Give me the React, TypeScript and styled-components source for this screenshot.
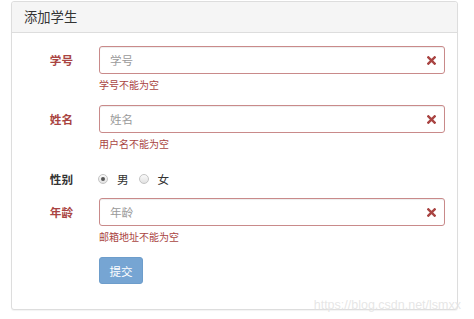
import React from "react";
import styled, { createGlobalStyle } from "styled-components";

const GlobalStyle = createGlobalStyle`
  html, body {
    margin: 0;
    padding: 0;
    background: #ffffff;
    font-family: "Noto Sans CJK SC", "Noto Sans", "Liberation Sans", sans-serif;
    color: #333333;
  }
`;

const Page = styled.div`
  position: relative;
  width: 474px;
  height: 319px;
  padding: 1px 0 0 11px;
  box-sizing: border-box;
  overflow: hidden;
`;

const Panel = styled.div`
  width: 447px;
  height: 309px;
  box-sizing: border-box;
  border: 1px solid #dddddd;
  border-radius: 3px;
  box-shadow: 0 1px 1px rgba(0, 0, 0, 0.05);
  background: #ffffff;
  display: flex;
  flex-direction: column;
`;

const PanelHeading = styled.div`
  height: 31px;
  box-sizing: border-box;
  background: #f5f5f5;
  border-bottom: 1px solid #dddddd;
  border-radius: 3px 3px 0 0;
  padding: 0 12px;
  display: flex;
  align-items: center;
`;

const PanelTitle = styled.h3`
  margin: 0;
  font-size: 13.3px;
  font-weight: 400;
  color: #333333;
  line-height: 1;
`;

const PanelBody = styled.form`
  padding: 13px 12px 0 0;
  display: flex;
  flex-direction: column;
`;

const Group = styled.div<{ $gap: number }>`
  display: flex;
  margin-bottom: ${(p) => p.$gap}px;
`;

const Label = styled.label<{ $error?: boolean }>`
  width: 61px;
  margin-right: 26px;
  flex: none;
  text-align: right;
  font-size: 11.6px;
  font-weight: 700;
  line-height: 28px;
  color: ${(p) => (p.$error ? "#a94442" : "#333333")};
`;

const Field = styled.div`
  flex: 1;
  display: flex;
  flex-direction: column;
`;

const InputWrap = styled.div`
  position: relative;
  height: 28px;
`;

const Input = styled.input`
  width: 100%;
  height: 28px;
  box-sizing: border-box;
  border: 1px solid #c98a8a;
  border-radius: 3px;
  padding: 0 24px 0 10px;
  font-family: inherit;
  font-size: 11.6px;
  color: #555555;
  outline: none;
  box-shadow: inset 0 1px 1px rgba(0, 0, 0, 0.075);
  &::placeholder {
    color: #9a9a9a;
  }
`;

const Feedback = styled.span`
  position: absolute;
  right: 9px;
  top: 10px;
  width: 9px;
  height: 9px;
  display: flex;
`;

const Help = styled.span`
  margin-top: 4px;
  font-size: 10px;
  line-height: 14px;
  color: #a94442;
`;

const RadioRow = styled.div`
  display: flex;
  align-items: center;
  height: 28px;
  font-size: 11.6px;
  color: #333333;
`;

const RadioItem = styled.label`
  display: flex;
  align-items: center;
  margin-right: 11px;
`;

const RadioDot = styled.span<{ $checked?: boolean }>`
  width: 10px;
  height: 10px;
  box-sizing: border-box;
  border-radius: 50%;
  border: 1px solid #c4c4c4;
  background: linear-gradient(#fafafa, #e2e2e2);
  margin: 0 9px 0 -1px;
  display: flex;
  align-items: center;
  justify-content: center;
  &::after {
    content: "";
    width: 4px;
    height: 4px;
    border-radius: 50%;
    background: ${(p) => (p.$checked ? "#555555" : "transparent")};
  }
`;

const SubmitButton = styled.button`
  width: 44px;
  height: 27px;
  border: 1px solid #6d9dcb;
  border-radius: 3px;
  background: #76a5d3;
  color: #ffffff;
  font-family: inherit;
  font-size: 11.6px;
  padding: 0;
  margin-left: 87px;
  cursor: not-allowed;
`;

const Watermark = styled.div`
  position: absolute;
  right: 13px;
  bottom: 7px;
  font-family: "Liberation Sans", Arial, sans-serif;
  font-size: 12.5px;
  color: rgba(205, 205, 205, 0.5);
  text-shadow: 0 0 1px rgba(255, 255, 255, 0.9);
`;

const RemoveIcon = () => (
  <svg width="9" height="9" viewBox="0 0 10 10">
    <path
      d="M1.5 1.5 L8.5 8.5 M8.5 1.5 L1.5 8.5"
      stroke="#a94442"
      strokeWidth="2.6"
      strokeLinecap="square"
    />
  </svg>
);

type TextField = {
  label: string;
  help: string;
  gap: number;
};

const TextGroup: React.FC<TextField> = ({ label, help, gap }) => (
  <Group $gap={gap}>
    <Label $error>{label}</Label>
    <Field>
      <InputWrap>
        <Input placeholder={label} />
        <Feedback>
          <RemoveIcon />
        </Feedback>
      </InputWrap>
      <Help>{help}</Help>
    </Field>
  </Group>
);

const App: React.FC = () => (
  <Page>
    <GlobalStyle />
    <Panel>
      <PanelHeading>
        <PanelTitle>添加学生</PanelTitle>
      </PanelHeading>
      <PanelBody onSubmit={(e) => e.preventDefault()}>
        <TextGroup label="学号" help="学号不能为空" gap={13} />
        <TextGroup label="姓名" help="用户名不能为空" gap={14} />
        <Group $gap={5}>
          <Label>性别</Label>
          <RadioRow>
            <RadioItem>
              <RadioDot $checked />男
            </RadioItem>
            <RadioItem>
              <RadioDot />女
            </RadioItem>
          </RadioRow>
        </Group>
        <TextGroup label="年龄" help="邮箱地址不能为空" gap={13} />
        <SubmitButton type="submit">提交</SubmitButton>
      </PanelBody>
    </Panel>
    <Watermark>https://blog.csdn.net/lsmxx</Watermark>
  </Page>
);

export default App;
